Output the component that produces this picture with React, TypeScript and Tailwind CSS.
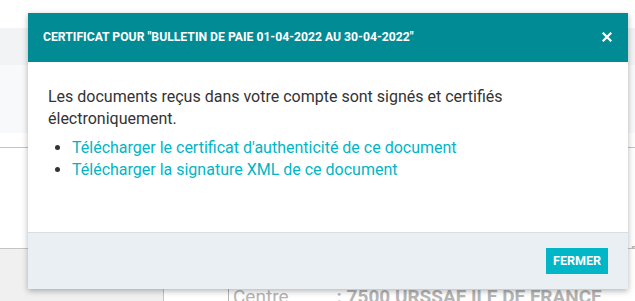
import React from 'react';

export default function App() {
  return (
    <div className="relative w-[635px] h-[301px] overflow-hidden bg-white font-['Roboto',sans-serif]">
      {/* Background page */}
      <div className="flex flex-col h-full">
        <div className="h-[28px] bg-white" />
        <div className="h-[37px] bg-[#f2f3f5]" />
        <div className="h-[68px] bg-[#f8f9fb]" />
        <div className="h-[15px] bg-white border-b border-[#c4c4c4]" />
        <div className="h-[101px] bg-white border-b border-[#c4c4c4] flex justify-end items-end">
          <span className="text-[17px] text-[#b5b5b5] mr-[-6px] mb-[-17px]">AR</span>
        </div>
        <div className="flex-1 flex bg-[#f0f0f0]">
          <div className="w-[163px]" />
          <div className="flex-1 bg-white border-l border-[#c4c4c4] flex items-end">
            <div className="flex items-end mb-[-5px]">
              <span className="ml-[64px] text-[19px] text-[#b5b5b5] border-l border-[#b5b5b5] pl-[4px] leading-none">Centre</span>
              <span className="ml-[48px] text-[19px] font-bold text-[#b5b5b5] leading-none">: 7500 URSSAF ILE DE FRANCE</span>
            </div>
          </div>
        </div>
      </div>

      {/* Modal */}
      <div className="absolute left-[28px] top-[13px] w-[600px] h-[276px] flex flex-col bg-white shadow-[0_2px_6px_rgba(0,0,0,0.3)]">
        <div className="h-[49px] bg-[#018b95] flex items-center justify-between pl-[15px] pr-[16px]">
          <h4 className="text-white font-bold text-[12.2px] leading-none">
            CERTIFICAT POUR "BULLETIN DE PAIE 01-04-2022 AU 30-04-2022"
          </h4>
          <svg width="10" height="10" viewBox="0 0 10 10" className="mt-[-1px]">
            <path d="M1.5 1.5 L8.5 8.5 M8.5 1.5 L1.5 8.5" stroke="white" strokeWidth="2.2" strokeLinecap="square" />
          </svg>
        </div>
        <div className="flex-1 px-[20px] pt-[24px] text-[#333] text-[16px] leading-[22px]">
          <p>Les documents reçus dans votre compte sont signés et certifiés électroniquement.</p>
          <ul className="mt-[7px] pl-[24px] list-disc text-[#01b5c6]">
            <li className="marker:text-[#333]">Télécharger le certificat d'authenticité de ce document</li>
            <li className="marker:text-[#333]">Télécharger la signature XML de ce document</li>
          </ul>
        </div>
        <div className="h-[57px] bg-[#eaeff3] border-t border-[#dadee2] flex items-center justify-end pr-[20px]">
          <button className="h-[26px] w-[62px] bg-[#00b6c7] text-white font-bold text-[12.5px]">FERMER</button>
        </div>
      </div>
    </div>
  );
}
